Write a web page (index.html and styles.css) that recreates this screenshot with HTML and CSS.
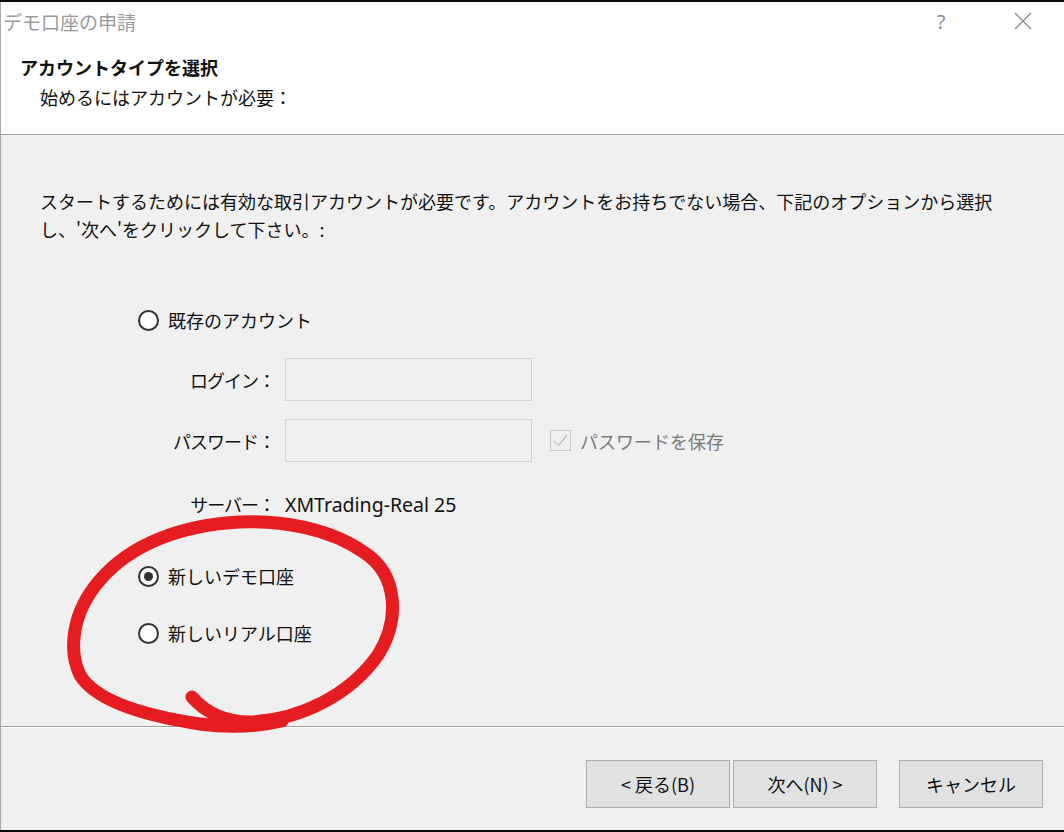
FILE: index.html
```html
<!DOCTYPE html>
<html lang="ja">
<head>
    <meta charset="UTF-8">
    <meta name="viewport" content="width=device-width, initial-scale=1.0">
    <title>デモ口座の申請</title>
    <link rel="stylesheet" href="styles.css">
</head>
<body>
    <div class="desk-strip"></div>
    <div class="window">
        <div class="titlebar">
            <span class="title">デモ口座の申請</span>
            <span class="help">?</span>
            <span class="close">
                <svg width="18" height="18" viewBox="0 0 18 18">
                    <path d="M1 1 L17 17 M17 1 L1 17" stroke="#8c8c8c" stroke-width="1.3" fill="none"/>
                </svg>
            </span>
        </div>
        <div class="header">
            <div class="heading">アカウントタイプを選択</div>
            <div class="subheading">始めるにはアカウントが必要：</div>
        </div>
        <div class="content">
            <p class="intro">スタートするためには有効な取引アカウントが必要です。アカウントをお持ちでない場合、下記のオプションから選択<br>し、'次へ'をクリックして下さい。:</p>
            <div class="options">
                <div class="radio-row"><span class="radio"></span>既存のアカウント</div>
                <div class="fields">
                    <span class="field-label">ログイン：</span>
                    <span class="input"></span>
                    <span></span>
                    <span class="field-label">パスワード：</span>
                    <span class="input"></span>
                    <span class="save">
                        <span class="checkbox">
                            <svg width="19" height="19" viewBox="0 0 19 19">
                                <path d="M3 10 L7.5 14.5 L16 4" stroke="#c2c2c2" stroke-width="1.4" fill="none"/>
                            </svg>
                        </span>
                        パスワードを保存
                    </span>
                    <span class="field-label">サーバー：</span>
                    <span class="value">XMTrading-Real 25</span>
                    <span></span>
                </div>
                <div class="radio-row demo"><span class="radio checked"></span>新しいデモ口座</div>
                <div class="radio-row real"><span class="radio"></span>新しいリアル口座</div>
            </div>
        </div>
        <div class="footer">
            <button class="btn">&lt;&nbsp;戻る(B)</button>
            <button class="btn">次へ(N)&nbsp;&gt;</button>
            <button class="btn cancel">キャンセル</button>
        </div>
    </div>
    <div class="desk-strip"></div>

    <svg class="annotation" width="1064" height="832" viewBox="0 0 1064 832">
        <path d="M192 697 C205 712 225 722 250 722 C300 720 350 695 378 655 C400 620 398 575 365 553 C330 528 280 520 240 522 C180 525 130 545 100 580 C72 612 68 650 80 675 C95 700 140 715 200 724 C230 728 260 726 282 721"
              stroke="#e51d20" stroke-width="13" fill="none" stroke-linecap="round" stroke-linejoin="round"/>
    </svg>
</body>
</html>
```

FILE: styles.css
```css
body {
    margin: 0;
    width: 1064px;
    height: 832px;
    overflow: hidden;
    position: relative;
    background: #f0f0f0;
    font-family: "Noto Sans CJK JP", "Noto Sans", sans-serif;
    font-size: 18px;
    color: #111;
}
.desk-strip {
    height: 2px;
    background: #0a0a0a;
}
.window {
    height: 828px;
    display: flex;
    flex-direction: column;
    border-left: 1px solid #a8a8a8;
    box-sizing: border-box;
}
.titlebar {
    display: flex;
    align-items: center;
    height: 38px;
    background: white;
}
.title {
    flex: 1;
    padding-left: 2px;
    font-size: 19px;
    color: #9a9a9a;
}
.help, .close {
    width: 82px;
    display: flex;
    justify-content: center;
    align-items: center;
    color: #8c8c8c;
}
.help {
    font-size: 20px;
    font-family: "Noto Sans", sans-serif;
}
.header {
    height: 95px;
    background: white;
    border-bottom: 1px solid #a0a0a0;
    padding-top: 12px;
    box-sizing: border-box;
    line-height: 30px;
}
.heading {
    padding-left: 19px;
    font-weight: bold;
}
.subheading {
    padding-left: 39px;
}
.content {
    flex: 1;
    padding: 52px 0 0 39px;
}
.intro {
    margin: 0;
    line-height: 28px;
}
.options {
    margin-left: 98px;
}
.radio-row {
    display: flex;
    align-items: center;
    height: 28px;
    margin-top: 63px;
}
.radio-row.demo {
    margin-top: 34px;
}
.radio-row.real {
    margin-top: 29px;
}
.radio {
    width: 21px;
    height: 21px;
    box-sizing: border-box;
    border: 2px solid #333;
    border-radius: 50%;
    background: white;
    margin-right: 9px;
    display: flex;
    justify-content: center;
    align-items: center;
}
.radio.checked::after {
    content: "";
    width: 9px;
    height: 9px;
    border-radius: 50%;
    background: #333;
}
.fields {
    display: grid;
    grid-template-columns: 137px 247px auto;
    grid-template-rows: 43px 43px 48px;
    column-gap: 10px;
    row-gap: 18px;
    align-items: center;
    margin-top: 24px;
}
.field-label {
    text-align: right;
    letter-spacing: -1px;
}
.input {
    height: 43px;
    box-sizing: border-box;
    border: 1px solid #d2d2d2;
    background: #f0f0f0;
}
.value {
    font-family: "Noto Sans", "Noto Sans CJK JP", sans-serif;
    font-size: 19.5px;
}
.save {
    display: flex;
    align-items: center;
    margin-left: 8px;
    color: #7a7a7a;
}
.checkbox {
    width: 21px;
    height: 21px;
    box-sizing: border-box;
    border: 1px solid #c8c8c8;
    background: #f0f0f0;
    margin-right: 9px;
    display: flex;
}
.footer {
    border-top: 1px solid #a0a0a0;
    box-shadow: inset 0 1px 0 #fff;
    height: 104px;
    box-sizing: border-box;
    display: flex;
    justify-content: flex-end;
    align-items: flex-start;
    gap: 3px;
    padding: 33px 21px 0 0;
}
.btn {
    width: 144px;
    height: 48px;
    border: 1px solid #adadad;
    background: #e1e1e1;
    font-family: "Noto Sans CJK JP", "Noto Sans", sans-serif;
    font-size: 18px;
    color: #111;
    padding: 0;
}
.btn.cancel {
    margin-left: 19px;
}
.annotation {
    position: absolute;
    top: 0;
    left: 0;
    pointer-events: none;
}
```
